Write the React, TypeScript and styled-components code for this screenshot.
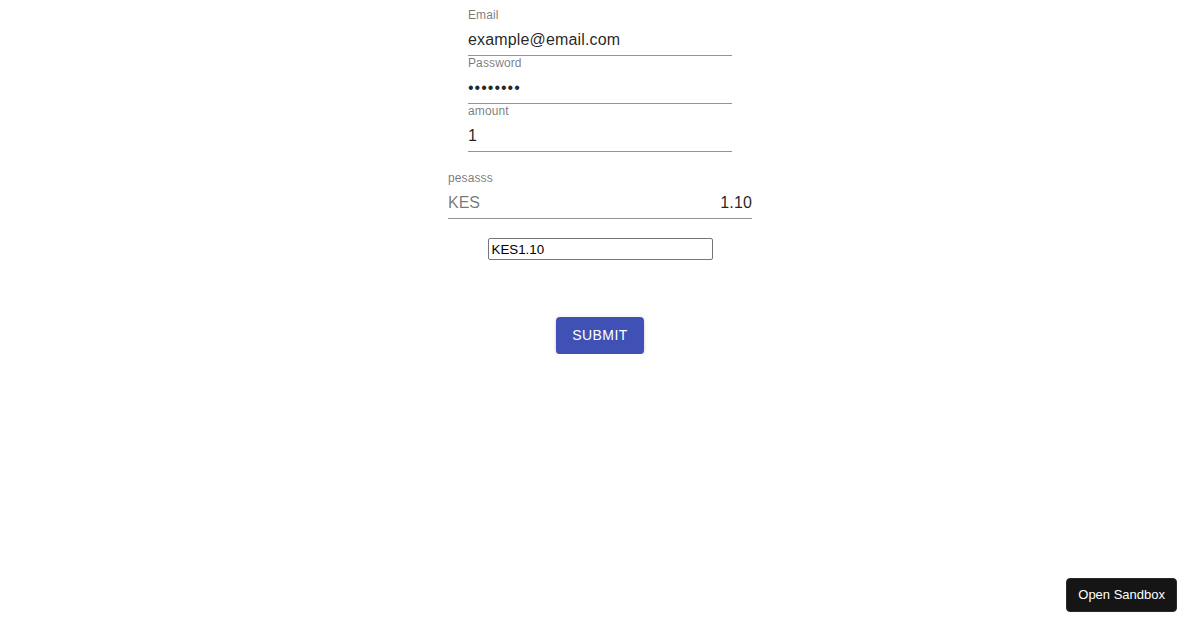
import React from 'react';
import styled, { createGlobalStyle } from 'styled-components';

const GlobalStyle = createGlobalStyle`
  body {
    margin: 8px;
    background: #fff;
    font-family: "Liberation Sans", Helvetica, Arial, sans-serif;
  }
`;

const Page = styled.form`
  display: flex;
  flex-direction: column;
  align-items: center;
`;

const Field = styled.div<{ $width: number; $top?: number }>`
  width: ${p => p.$width}px;
  margin-top: ${p => p.$top ?? 0}px;
  display: flex;
  flex-direction: column;
`;

const Label = styled.label`
  display: block;
  height: 16px;
  padding-top: 1px;
  box-sizing: border-box;
  font-size: 12px;
  line-height: 12px;
  color: rgba(0, 0, 0, 0.54);
  letter-spacing: 0.00938em;
`;

const InputBase = styled.div`
  display: flex;
  align-items: center;
  height: 32px;
  box-sizing: border-box;
  border-bottom: 1px solid rgba(0, 0, 0, 0.42);
`;

const Input = styled.input<{ $align?: string; $spacing?: number }>`
  flex: 1;
  min-width: 0;
  border: 0;
  outline: none;
  background: transparent;
  padding: 7px 0 6px;
  height: 19px;
  font-family: "Liberation Sans", Helvetica, Arial, sans-serif;
  font-size: 16px;
  letter-spacing: ${p => (p.$spacing ? `${p.$spacing}px` : '0.00938em')};
  color: rgba(0, 0, 0, 0.87);
  text-align: ${p => p.$align ?? 'left'};
`;

const Adornment = styled.span`
  margin-right: 8px;
  font-size: 16px;
  color: rgba(0, 0, 0, 0.54);
`;

const PlainInput = styled.input`
  margin-top: 19px;
  width: 225px;
  height: 22px;
  box-sizing: border-box;
  padding: 1px 3px;
  border: 1px solid #767676;
  border-radius: 2px;
  font-family: "Liberation Sans", Arial, sans-serif;
  font-size: 13.33px;
  color: #000;
`;

const SubmitButton = styled.button`
  margin-top: 57px;
  min-width: 64px;
  padding: 6px 16px;
  border: 0;
  border-radius: 4px;
  background: #3f51b5;
  color: #fff;
  font-family: "Liberation Sans", Helvetica, Arial, sans-serif;
  font-size: 14px;
  font-weight: 500;
  line-height: 1.75;
  letter-spacing: 0.02857em;
  text-transform: uppercase;
  box-shadow: 0 3px 1px -2px rgba(0, 0, 0, 0.2), 0 2px 2px 0 rgba(0, 0, 0, 0.14),
    0 1px 5px 0 rgba(0, 0, 0, 0.12);
  cursor: pointer;
`;

const SandboxLink = styled.a`
  position: fixed;
  right: 23px;
  bottom: 18px;
  height: 34px;
  padding: 0 11px 1px;
  display: flex;
  align-items: center;
  border-radius: 4px;
  background: #151515;
  color: #fff;
  font-family: "Liberation Sans", Helvetica, Arial, sans-serif;
  font-size: 13px;
  text-decoration: none;
  border: 1px solid #2a2a2a;
  box-sizing: border-box;
`;

export default function App() {
  return (
    <>
      <GlobalStyle />
      <Page onSubmit={e => e.preventDefault()}>
        <Field $width={264}>
          <Label>Email</Label>
          <InputBase>
            <Input type="email" defaultValue="example@email.com" />
          </InputBase>
        </Field>
        <Field $width={264}>
          <Label>Password</Label>
          <InputBase>
            <Input type="password" defaultValue="password" $spacing={1} />
          </InputBase>
        </Field>
        <Field $width={264}>
          <Label>amount</Label>
          <InputBase>
            <Input type="text" defaultValue="1" />
          </InputBase>
        </Field>
        <Field $width={304} $top={19}>
          <Label>pesasss</Label>
          <InputBase>
            <Adornment>KES</Adornment>
            <Input type="text" defaultValue="1.10" $align="right" />
          </InputBase>
        </Field>
        <PlainInput type="text" defaultValue="KES1.10" />
        <SubmitButton type="submit">Submit</SubmitButton>
      </Page>
      <SandboxLink href="#">Open Sandbox</SandboxLink>
    </>
  );
}
